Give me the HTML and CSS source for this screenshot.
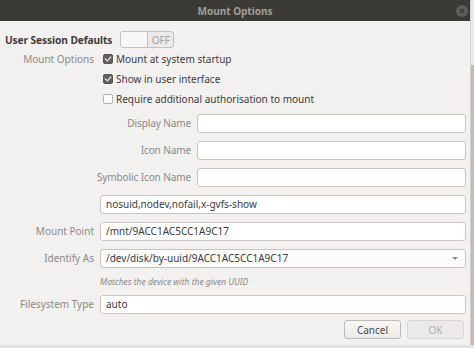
FILE: index.html
```html
<!DOCTYPE html>
<html lang="en">

<head>
    <meta charset="UTF-8" />
    <title>Mount Options</title>
    <link rel="stylesheet" href="styles.css">
</head>

<body>
    <div class="window">
        <div class="titlebar">
            <span class="title">Mount Options</span>
            <span class="close">
                <svg width="12" height="12" viewBox="0 0 12 12">
                    <circle cx="6" cy="6" r="6" fill="#5e5d59" />
                    <path d="M4 4 L8 8 M8 4 L4 8" stroke="#3a3935" stroke-width="1.4" />
                </svg>
            </span>
        </div>

        <div class="content">
            <div class="defaults">
                <span class="defaults-label">User Session Defaults</span>
                <div class="switch">
                    <span class="knob"></span>
                    <span class="switch-text">OFF</span>
                </div>
            </div>

            <div class="form">
                <label class="label top">Mount Options</label>
                <div class="checks">
                    <div class="check"><span class="box checked"></span>Mount at system startup</div>
                    <div class="check"><span class="box checked"></span>Show in user interface</div>
                    <div class="check"><span class="box"></span>Require additional authorisation to mount</div>
                </div>

                <div></div>
                <div class="sub-form">
                    <label class="label">Display Name</label>
                    <div class="entry"></div>
                    <label class="label">Icon Name</label>
                    <div class="entry"></div>
                    <label class="label">Symbolic Icon Name</label>
                    <div class="entry"></div>
                </div>

                <div></div>
                <div class="entry">nosuid,nodev,nofail,x-gvfs-show</div>

                <label class="label">Mount Point</label>
                <div class="entry">/mnt/9ACC1AC5CC1A9C17</div>

                <label class="label">Identify As</label>
                <div class="entry combo">
                    <span>/dev/disk/by-uuid/9ACC1AC5CC1A9C17</span>
                    <span class="arrow"></span>
                </div>

                <div></div>
                <div class="hint">Matches the device with the given UUID</div>

                <label class="label">Filesystem Type</label>
                <div class="entry">auto</div>
            </div>

            <div class="buttons">
                <button class="btn">Cancel</button>
                <button class="btn disabled">OK</button>
            </div>
        </div>
    </div>
</body>

</html>
```

FILE: styles.css
```css
html {
    background: linear-gradient(to bottom, #ecebea 65px, #cdb6aa 65px);
}

body {
    margin: 0;
    font-family: "Noto Sans", "Open Sans", sans-serif;
    font-size: 10px;
    color: #3c3c3c;
    height: 348px;
    background: linear-gradient(to bottom, transparent 345px, #e4e2e0 345px);
}

.window {
    width: 471px;
    height: 345px;
    background: #f2f1f0;
    border-right: 1px solid #d2d0ce;
    box-sizing: border-box;
    display: flex;
    flex-direction: column;
}

.titlebar {
    height: 21px;
    background: #3b3a36;
    display: flex;
    align-items: center;
    justify-content: center;
    position: relative;
}

.title {
    color: #a19e97;
    font-weight: bold;
    font-size: 10px;
}

.close {
    position: absolute;
    right: 2px;
    top: 5px;
    display: flex;
}

.content {
    padding: 10px 4px 0 5px;
    display: flex;
    flex-direction: column;
}

.defaults {
    display: flex;
    align-items: center;
    gap: 8px;
    height: 17px;
}

.defaults-label {
    font-weight: bold;
    font-size: 10.2px;
    letter-spacing: -0.1px;
}

.switch {
    width: 54px;
    height: 17px;
    box-sizing: border-box;
    border: 1px solid #c4c1be;
    border-radius: 3px;
    background: #ebeae8;
    display: flex;
    align-items: center;
}

.knob {
    width: 26px;
    height: 15px;
    background: #f7f7f6;
    border-right: 1px solid #c4c1be;
    border-radius: 2px 0 0 2px;
}

.switch-text {
    flex: 1;
    text-align: center;
    color: #a3a19e;
}

.form {
    display: grid;
    grid-template-columns: 89px 1fr;
    column-gap: 6px;
    row-gap: 8px;
    margin-top: 1px;
}

.label {
    color: #8b8985;
    text-align: right;
    line-height: 19px;
    white-space: nowrap;
}

.label.top {
    line-height: 20px;
}

.checks {
    display: flex;
    flex-direction: column;
    margin-bottom: -3px;
}

.check {
    height: 20px;
    display: flex;
    align-items: center;
    gap: 3px;
    padding-left: 3px;
}

.box {
    width: 10px;
    height: 10px;
    box-sizing: border-box;
    border: 1px solid #b5b3b0;
    border-radius: 2px;
    background: #fbfbfb;
    position: relative;
}

.box.checked {
    background: #606060;
    border-color: #555;
}

.box.checked::after {
    content: "";
    position: absolute;
    left: 2px;
    top: 0px;
    width: 3px;
    height: 5px;
    border: solid #fff;
    border-width: 0 1.5px 1.5px 0;
    transform: rotate(40deg);
}

.sub-form {
    display: grid;
    grid-template-columns: 95px 1fr;
    column-gap: 6px;
    row-gap: 8px;
    margin-left: -4px;
}

.sub-form .label {
    letter-spacing: -0.1px;
}

.entry {
    height: 19px;
    box-sizing: border-box;
    border: 1px solid #c7c5c2;
    border-radius: 3px;
    background: #fff;
    padding: 0 5px;
    line-height: 17px;
    color: #3c3c3c;
    white-space: nowrap;
}

.combo {
    display: flex;
    justify-content: space-between;
    align-items: center;
    background: #fbfbfa;
}

.arrow {
    width: 0;
    height: 0;
    border-left: 3px solid transparent;
    border-right: 3px solid transparent;
    border-top: 3px solid #8a8a8a;
    margin-right: 2px;
}

.hint {
    height: 11px;
    line-height: 11px;
    font-size: 8.5px;
    font-style: italic;
    color: #8b8985;
}

.buttons {
    display: flex;
    justify-content: flex-end;
    gap: 6px;
    margin-top: 6px;
    padding-right: 2px;
}

.btn {
    width: 57px;
    height: 19px;
    border: 1px solid #bdbab7;
    border-radius: 3px;
    background: linear-gradient(to bottom, #f8f7f6, #ecebe9);
    font-family: inherit;
    font-size: 10px;
    color: #4a4a4a;
    padding: 0;
}

.btn.disabled {
    background: #ebeae9;
    border-color: #d8d6d3;
    color: #aeadab;
}
```
